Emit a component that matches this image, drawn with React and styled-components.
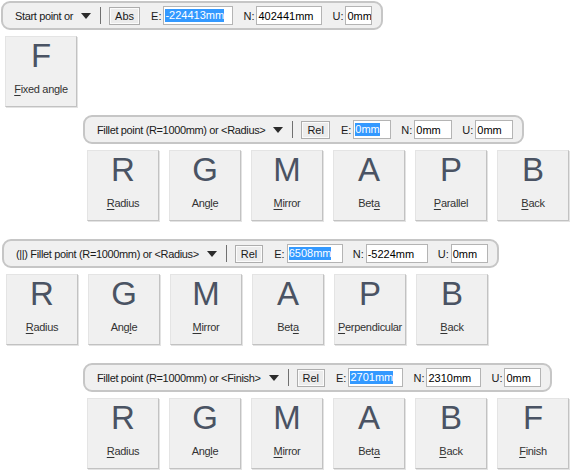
import React from 'react';
import styled, { createGlobalStyle } from 'styled-components';

const Global = createGlobalStyle`
  html, body { margin: 0; padding: 0; background: #ffffff; }
  body { font-family: "Liberation Sans", Arial, sans-serif; }
`;

const Page = styled.div`
  display: flex;
  flex-direction: column;
  width: 571px;
  height: 470px;
  overflow: hidden;
`;

const Section = styled.section`
  display: flex;
  flex-direction: column;
  align-items: flex-start;
  margin-top: ${(p) => p.$top}px;
  padding-left: ${(p) => p.$indent}px;
`;

const Toolbar = styled.div`
  box-sizing: border-box;
  height: 29px;
  display: flex;
  align-items: center;
  padding: 0 9px 0 12px;
  border: 2px solid #c6c6c6;
  border-radius: 9px;
  background: #f0f0f0;
  font-size: 11px;
  color: #1a1a1a;
  white-space: nowrap;
`;

const Prompt = styled.span`
  letter-spacing: -0.35px;
`;

const DropArrow = styled.svg`
  width: 10px;
  height: 6px;
  margin-left: 8px;
  flex: none;
`;

const Divider = styled.span`
  width: 1px;
  height: 17px;
  background: #707070;
  margin: 0 8px 0 9px;
`;

const ModeButton = styled.span`
  box-sizing: border-box;
  height: 18px;
  display: flex;
  align-items: center;
  padding: 0 5px;
  border: 1px solid #adadad;
  box-shadow: inset 0 0 0 1px #fbfbfb;
  background: #ececec;
  margin-right: 11px;
`;

const AxisLabel = styled.span`
  margin-right: 2px;
`;

const Field = styled.span`
  box-sizing: border-box;
  width: ${(p) => p.$w}px;
  height: 19px;
  display: flex;
  align-items: center;
  padding-left: 1px;
  border: 1px solid #b4b4b4;
  background: #ffffff;
  color: #000;
  margin-right: ${(p) => (p.$last ? 0 : 10)}px;
  overflow: hidden;
`;

const Selected = styled.span`
  background: #3399ff;
  color: #ffffff;
  line-height: 13px;
`;

const KeyRow = styled.div`
  display: flex;
  gap: 10px;
  margin-top: 6px;
  margin-left: 4px;
`;

const Key = styled.div`
  box-sizing: border-box;
  width: 72px;
  height: 71px;
  display: flex;
  flex-direction: column;
  align-items: center;
  padding-top: 2px;
  background: #f0f0f0;
  border: 1px solid #e4e4e4;
  border-right-color: #c2c2c2;
  border-bottom-color: #c2c2c2;
  box-shadow: 1px 1px 0 #e3e3e3;
`;

const KeyLetter = styled.span`
  font-size: 33px;
  line-height: 33px;
  color: #4a5363;
`;

const KeyLabel = styled.span`
  margin-top: 11px;
  font-size: 11px;
  line-height: 13px;
  letter-spacing: -0.3px;
  color: #333333;
  white-space: nowrap;

  u {
    text-decoration: underline;
    text-underline-offset: 2px;
  }
`;

const Arrow = () => (
  <DropArrow viewBox="0 0 10 6">
    <path d="M0 0 H10 L5 6 Z" fill="#2b2b2b" />
  </DropArrow>
);

// Label with one underlined access-key letter
const Mnemonic = ({ text, at }) => (
  <>
    {text.slice(0, at)}
    <u>{text[at]}</u>
    {text.slice(at + 1)}
  </>
);

const CommandBar = ({ prompt, mode, e, n, u }) => (
  <Toolbar>
    <Prompt>{prompt}</Prompt>
    <Arrow />
    <Divider />
    <ModeButton>{mode}</ModeButton>
    <AxisLabel>E:</AxisLabel>
    <Field $w={e.w}>
      <Selected>{e.v}</Selected>
    </Field>
    <AxisLabel>N:</AxisLabel>
    <Field $w={n.w}>{n.v}</Field>
    <AxisLabel>U:</AxisLabel>
    <Field $w={u.w} $last>
      {u.v}
    </Field>
  </Toolbar>
);

const Keys = ({ items }) => (
  <KeyRow>
    {items.map(([letter, label, at]) => (
      <Key key={label}>
        <KeyLetter>{letter}</KeyLetter>
        <KeyLabel>
          <Mnemonic text={label} at={at} />
        </KeyLabel>
      </Key>
    ))}
  </KeyRow>
);

const R = ['R', 'Radius', 0];
const G = ['G', 'Angle', 3];
const M = ['M', 'Mirror', 0];
const A = ['A', 'Beta', 3];
const B = ['B', 'Back', 0];

export default function App() {
  return (
    <Page>
      <Global />
      <Section $top={1} $indent={1}>
        <CommandBar
          prompt="Start point or"
          mode="Abs"
          e={{ w: 70, v: '-224413mm' }}
          n={{ w: 66, v: '402441mm' }}
          u={{ w: 27, v: '0mm' }}
        />
        <Keys items={[['F', 'Fixed angle', 0]]} />
      </Section>

      <Section $top={8} $indent={83}>
        <CommandBar
          prompt="Fillet point (R=1000mm) or <Radius>"
          mode="Rel"
          e={{ w: 38, v: '0mm' }}
          n={{ w: 38, v: '0mm' }}
          u={{ w: 38, v: '0mm' }}
        />
        <Keys items={[R, G, M, A, ['P', 'Parallel', 0], B]} />
      </Section>

      <Section $top={18} $indent={2}>
        <CommandBar
          prompt="(||) Fillet point (R=1000mm) or <Radius>"
          mode="Rel"
          e={{ w: 56, v: '6508mm' }}
          n={{ w: 62, v: '-5224mm' }}
          u={{ w: 37, v: '0mm' }}
        />
        <Keys items={[R, G, M, A, ['P', 'Perpendicular', 0], B]} />
      </Section>

      <Section $top={18} $indent={83}>
        <CommandBar
          prompt="Fillet point (R=1000mm) or <Finish>"
          mode="Rel"
          e={{ w: 55, v: '2701mm' }}
          n={{ w: 55, v: '2310mm' }}
          u={{ w: 37, v: '0mm' }}
        />
        <Keys items={[R, G, M, A, B, ['F', 'Finish', 0]]} />
      </Section>
    </Page>
  );
}
